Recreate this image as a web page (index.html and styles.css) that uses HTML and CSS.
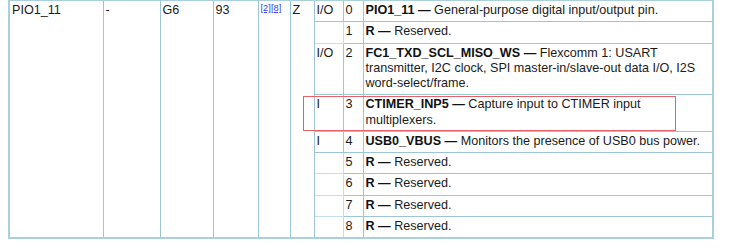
FILE: index.html
```html
<!DOCTYPE html>
<html>
<head>
<meta charset="utf-8">
<link rel="stylesheet" href="styles.css">
</head>
<body>
<div class="wrap">
<table class="pins">
<colgroup>
<col class="c1"><col class="c2"><col class="c3"><col class="c4"><col class="c5"><col class="c6"><col class="c7"><col class="c8"><col class="c9">
</colgroup>
<tbody>
<tr>
<td rowspan="9">PIO1_11</td>
<td rowspan="9">-</td>
<td rowspan="9">G6</td>
<td rowspan="9">93</td>
<td rowspan="9" class="refs"><a href="#">[2]</a><a href="#">[8]</a></td>
<td rowspan="9">Z</td>
<td>I/O</td><td>0</td><td><b>PIO1_11 —</b> General-purpose digital input/output pin.</td>
</tr>
<tr><td class="lt"></td><td>1</td><td><b>R —</b> Reserved.</td></tr>
<tr><td>I/O</td><td>2</td><td><b>FC1_TXD_SCL_MISO_WS —</b> Flexcomm 1: USART transmitter, I2C clock, SPI master-in/slave-out data I/O, I2S word-select/frame.</td></tr>
<tr><td>I</td><td>3</td><td><b>CTIMER_INP5 —</b> Capture input to CTIMER input multiplexers.</td></tr>
<tr><td>I</td><td>4</td><td><b>USB0_VBUS —</b> Monitors the presence of USB0 bus power.</td></tr>
<tr><td class="lt"></td><td>5</td><td><b>R —</b> Reserved.</td></tr>
<tr><td class="lt"></td><td>6</td><td><b>R —</b> Reserved.</td></tr>
<tr><td class="lt"></td><td>7</td><td><b>R —</b> Reserved.</td></tr>
<tr><td class="lt"></td><td>8</td><td><b>R —</b> Reserved.</td></tr>
</tbody>
</table>
<div class="mark"></div>
</div>
</body>
</html>
```

FILE: styles.css
```css
html, body {
  margin: 0;
  padding: 0;
  background: #ffffff;
}
.wrap {
  position: relative;
  margin: -1px 0 0 8px;
  width: 720px;
}
.pins {
  border-collapse: collapse;
  table-layout: fixed;
  width: 705px;
  font-family: "Liberation Sans", Arial, sans-serif;
  font-size: 12.6px;
  line-height: 15.25px;
  color: #1a1a1a;
  border: 2px solid #a9d0db;
}
.pins td {
  border: 1px solid #9cc6d3;
  padding: 2px 2px 3px 2px;
  vertical-align: top;
}
.pins td.lt {
  border-color: #c4dfe7;
}
.c1 { width: 94px; }
.c2 { width: 57px; }
.c3 { width: 53px; }
.c4 { width: 45px; }
.c5 { width: 32px; }
.c6 { width: 24px; }
.c7 { width: 29px; }
.c8 { width: 20px; }
.c9 { width: 350px; }
.pins b {
  font-weight: bold;
  color: #111;
}
.refs a {
  font-size: 9.4px;
  line-height: 10px;
  color: #3a3aff;
  text-decoration: underline;
  vertical-align: top;
}
.mark {
  position: absolute;
  left: 295px;
  top: 97px;
  width: 371px;
  height: 33px;
  border: 1.5px solid #e9606a;
}
```
